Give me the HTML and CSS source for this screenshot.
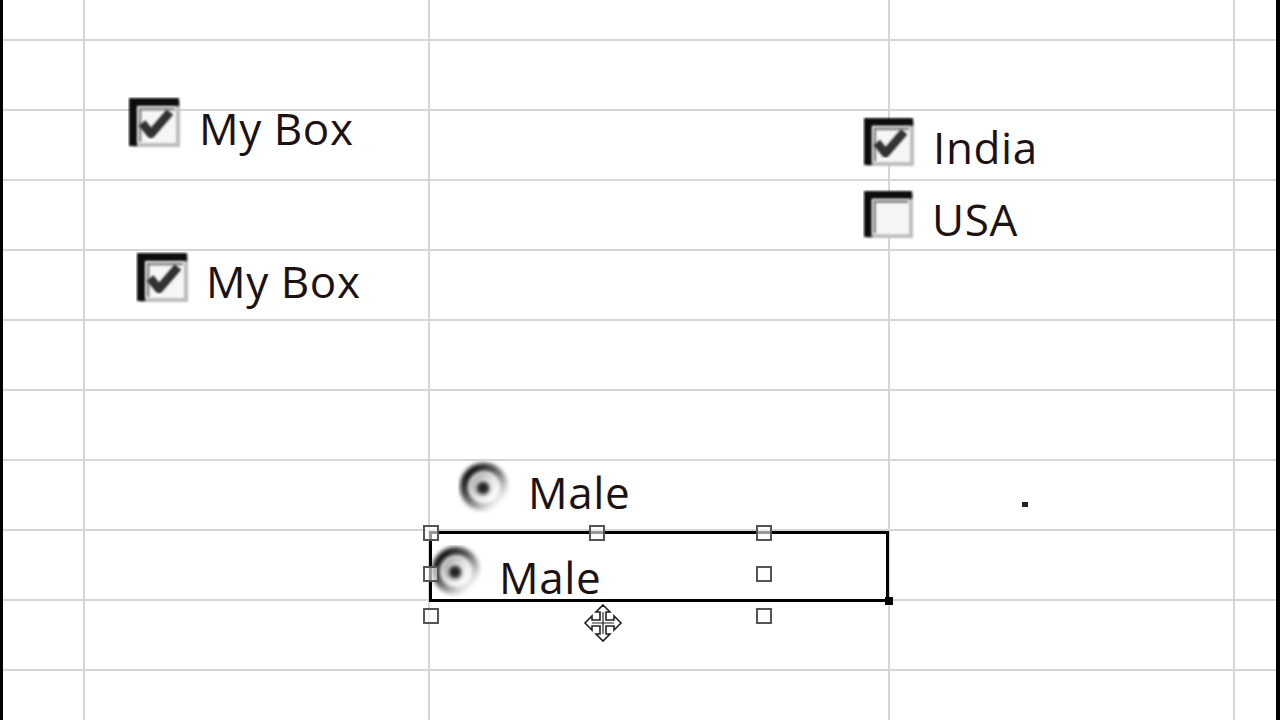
FILE: index.html
```html
<!DOCTYPE html>
<html>
<head>
<meta charset="utf-8">
<link rel="stylesheet" href="styles.css">
</head>
<body>
<div class="screen">
  <div class="sheet">
    <div class="grid" id="grid"></div>

    <svg width="0" height="0" class="defs">
      <defs>
        <filter id="b1" x="-20%" y="-20%" width="140%" height="140%"><feGaussianBlur stdDeviation="1.3"/></filter>
        <filter id="b2" x="-30%" y="-30%" width="160%" height="160%"><feGaussianBlur stdDeviation="2.2"/></filter>
        <linearGradient id="ring" x1="0.1" y1="0.1" x2="0.9" y2="0.9">
          <stop offset="0" stop-color="#0a0a0a"/>
          <stop offset="0.45" stop-color="#666"/>
          <stop offset="1" stop-color="#fff"/>
        </linearGradient>
        <linearGradient id="ring2" x1="0" y1="0" x2="1" y2="1">
          <stop offset="0" stop-color="#999"/>
          <stop offset="0.6" stop-color="#e6e6e6"/>
          <stop offset="1" stop-color="#fff"/>
        </linearGradient>
        <symbol id="box" viewBox="0 0 54 52">
          <rect x="3" y="3" width="48" height="46" fill="#f6f6f6"/>
          <polyline points="50,4 50,48 4,48" fill="none" stroke="#bdbdbd" stroke-width="4" filter="url(#b1)"/>
          <polyline points="5,49 5,5 51,5" fill="none" stroke="#0c0c0c" stroke-width="8" filter="url(#b1)"/>
          <polyline points="12,45 12,12 47,12" fill="none" stroke="#8a8a8a" stroke-width="3" filter="url(#b1)"/>
        </symbol>
        <symbol id="check" viewBox="0 0 54 52">
          <path d="M14 26 L23 37 L42 15" fill="none" stroke="#333" stroke-width="8.5" stroke-linejoin="round" filter="url(#b1)"/>
        </symbol>
        <symbol id="radio" viewBox="0 0 50 50">
          <circle cx="25" cy="25" r="19" fill="none" stroke="url(#ring)" stroke-width="8" filter="url(#b2)"/>
          <circle cx="25" cy="25" r="11" fill="none" stroke="url(#ring2)" stroke-width="5" filter="url(#b2)"/>
          <circle cx="24" cy="26" r="6.5" fill="#222" filter="url(#b2)"/>
        </symbol>
      </defs>
    </svg>

    <svg class="ctl cb1" width="54" height="52"><use href="#box"/><use href="#check"/></svg>
    <span class="label l-mybox1">My Box</span>

    <svg class="ctl cb2" width="54" height="52"><use href="#box"/><use href="#check"/></svg>
    <span class="label l-mybox2">My Box</span>

    <svg class="ctl cb3" width="53" height="51"><use href="#box"/><use href="#check"/></svg>
    <span class="label l-india">India</span>

    <svg class="ctl cb4" width="52" height="50"><use href="#box"/></svg>
    <span class="label l-usa">USA</span>

    <svg class="ctl rd1" width="52" height="52"><use href="#radio"/></svg>
    <span class="label l-male1">Male</span>

    <div class="selection"></div>
    <svg class="ctl rd2" width="52" height="52"><use href="#radio"/></svg>
    <span class="label l-male2">Male</span>

    <div class="handle h1"></div>
    <div class="handle h2"></div>
    <div class="handle h3"></div>
    <div class="handle h4"></div>
    <div class="handle h5"></div>
    <div class="handle h6"></div>
    <div class="handle h7"></div>
    <div class="corner"></div>
    <div class="dot"></div>

    <svg class="ctl move" width="40" height="40" viewBox="0 0 40 40">
      <path d="M20 2 L27 9 L23 9 L23 17 L31 17 L31 13 L38 20 L31 27 L31 23 L23 23 L23 31 L27 31 L20 38 L13 31 L17 31 L17 23 L9 23 L9 27 L2 20 L9 13 L9 17 L17 17 L17 9 L13 9 Z" fill="#fff" stroke="#222" stroke-width="1.6" stroke-linejoin="miter"/>
      <path d="M20 9 L20 31 M9 20 L31 20" stroke="#222" stroke-width="1.2"/>
    </svg>
  </div>
</div>
<script src="grid.js"></script>
</body>
</html>
```

FILE: grid.js
```js
(function () {
  var g = document.getElementById('grid');
  for (var i = 0; i < 55; i++) {
    var c = document.createElement('div');
    c.className = 'cell';
    g.appendChild(c);
  }
})();
```

FILE: styles.css
```css
html, body {
  margin: 0;
  padding: 0;
  background: #000;
}
.screen {
  width: 1280px;
  height: 720px;
  display: flex;
  padding: 0 4px 0 3px;
  box-sizing: border-box;
  overflow: hidden;
}
.sheet {
  position: relative;
  flex: 1;
  height: 720px;
  background: #fff;
  overflow: hidden;
  font-family: "Open Sans", "Noto Sans", sans-serif;
}
.grid {
  display: grid;
  grid-template-columns: 80px 343px 458px 343px 41px;
  grid-template-rows: 39px repeat(9, 68px) 49px;
  gap: 2px;
  background: #d6d6d6;
  width: 100%;
  height: 100%;
}
.cell {
  background: #fff;
}
.defs {
  position: absolute;
}
.ctl {
  position: absolute;
  display: block;
}
.label {
  position: absolute;
  font-size: 44px;
  line-height: 1;
  letter-spacing: 0.6px;
  color: #1c1214;
  white-space: nowrap;
}
/* sheet origin is x=3 in the screenshot */
.cb1 { left: 125px; top: 97px; }
.l-mybox1 { left: 196px; top: 106px; }
.cb2 { left: 133px; top: 252px; }
.l-mybox2 { left: 203px; top: 259px; }
.cb3 { left: 860px; top: 117px; }
.l-india { left: 930px; top: 125px; }
.cb4 { left: 860px; top: 190px; }
.l-usa { left: 929px; top: 197px; }
.rd1 { left: 455px; top: 461px; }
.l-male1 { left: 525px; top: 470px; }
.rd2 { left: 427px; top: 545px; }
.l-male2 { left: 496px; top: 555px; }

.selection {
  position: absolute;
  left: 426px;
  top: 531px;
  width: 454px;
  height: 65px;
  border: 3px solid #000;
}
.handle {
  position: absolute;
  width: 12px;
  height: 12px;
  border: 2px solid #555;
  background: rgba(255,255,255,0.6);
}
.h1 { left: 420px; top: 525px; }
.h2 { left: 586px; top: 525px; }
.h3 { left: 753px; top: 525px; }
.h4 { left: 420px; top: 566px; }
.h5 { left: 753px; top: 566px; }
.h6 { left: 420px; top: 608px; }
.h7 { left: 753px; top: 608px; }
.corner {
  position: absolute;
  left: 882px;
  top: 597px;
  width: 8px;
  height: 8px;
  background: #000;
}
.dot {
  position: absolute;
  left: 1019px;
  top: 502px;
  width: 6px;
  height: 5px;
  background: #222;
}
.move { left: 580px; top: 603px; }
```
